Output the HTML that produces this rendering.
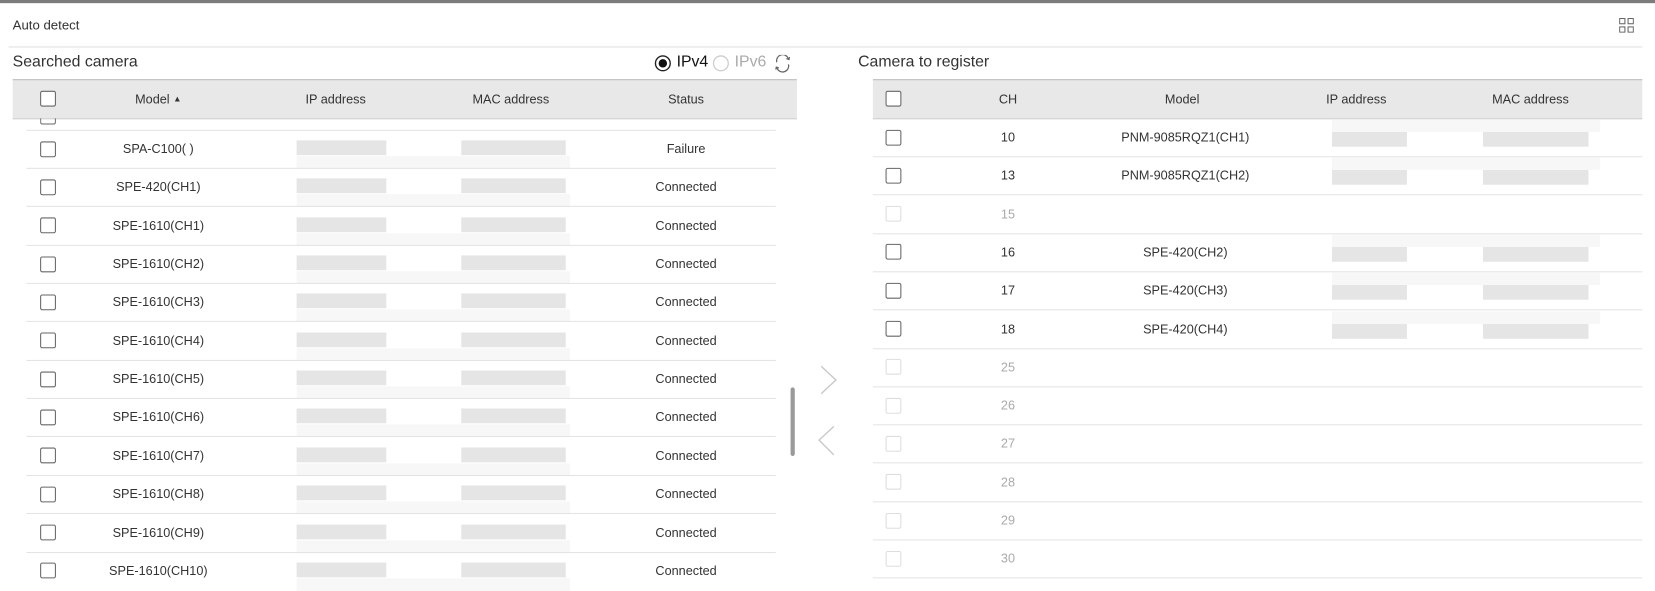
<!DOCTYPE html>
<html><head><meta charset="utf-8"><style>
html,body{margin:0;padding:0;background:#fff;overflow:hidden;width:1655px;height:580px}
#w{position:absolute;left:0;top:0;width:1568px;height:550px;transform:scale(1.05548);transform-origin:0 0;font-family:"Liberation Sans",sans-serif;color:#333}
.a{position:absolute}
.t{position:absolute;font-size:12px;transform:translate(-50%,-50%);white-space:nowrap}
.cb{position:absolute;width:13px;height:13px;border:1.3px solid #666;border-radius:2px;background:#fff}
.cb.d{border-color:#ddd}
.ln{position:absolute;height:1px;background:#e4e4e4}
.bl{position:absolute;height:14px;background:#e5e5e5}
.bl2{position:absolute;height:12px;background:#f7f7f7}
.hd{position:absolute;top:75px;height:36px;background:#e8e8e8;border-top:1.5px solid #bdbdbd;border-bottom:1px solid #d0d0d0}
</style></head><body><div id="w">
<div class="a" style="left:0;top:0;width:1568px;height:3px;background:#7c7c7c"></div>
<div class="a" style="left:12px;top:17px;font-size:12.5px">Auto detect</div>
<svg class="a" style="left:1534px;top:17px" width="14" height="14" viewBox="0 0 14 14" fill="none" stroke="#666" stroke-width="1"><rect x="0.5" y="0.5" width="5" height="5"/><rect x="8.5" y="0.5" width="5" height="5"/><rect x="0.5" y="8.5" width="5" height="5"/><rect x="8.5" y="8.5" width="5" height="5"/></svg>
<div class="ln" style="left:8px;top:44px;width:1548px;background:#e0e0e0"></div>
<div class="a" style="left:12px;top:50px;font-size:15px">Searched camera</div>
<svg class="a" style="left:620px;top:52px" width="140" height="18"><circle cx="8" cy="8" r="7" fill="#fff" stroke="#222" stroke-width="1.3"/><circle cx="8" cy="8" r="4" fill="#111"/><circle cx="63" cy="8" r="7" fill="#fff" stroke="#ccc" stroke-width="1.2"/><path d="M127 4 A5.5 5.5 0 0 0 116 7 M116 12 A5.5 5.5 0 0 0 127 9" stroke="#666" stroke-width="1.2" fill="none"/><path d="M125 3.5 L127.5 4.5 L128 2" stroke="#666" stroke-width="1.1" fill="none"/><path d="M118 12.5 L115.5 11.5 L115 14" stroke="#666" stroke-width="1.1" fill="none"/></svg>
<div class="a" style="left:641px;top:50px;font-size:15px;color:#111">IPv4</div>
<div class="a" style="left:696px;top:50px;font-size:15px;color:#aaa">IPv6</div>
<div class="a" style="left:813px;top:50px;font-size:15px">Camera to register</div>

<div class="hd" style="left:12px;width:743px"></div>
<div class="cb" style="left:38px;top:86px"></div>
<div class="t" style="left:150px;top:94px">Model <span style="font-size:8px;vertical-align:2px">▲</span></div>
<div class="t" style="left:318px;top:94px">IP address</div>
<div class="t" style="left:484px;top:94px">MAC address</div>
<div class="t" style="left:650px;top:94px">Status</div>

<div class="hd" style="left:827px;width:729px"></div>
<div class="cb" style="left:839px;top:86px"></div>
<div class="t" style="left:955px;top:94px">CH</div>
<div class="t" style="left:1120px;top:94px">Model</div>
<div class="t" style="left:1285px;top:94px">IP address</div>
<div class="t" style="left:1450px;top:94px">MAC address</div>

<div class="a" style="left:38px;top:112px;width:15px;height:6px;border:1.3px solid #666;border-top:none;box-sizing:border-box;border-radius:0 0 2px 2px"></div>
<div id="L"></div><div id="R"></div>

<div class="a" style="left:749px;top:367px;width:4px;height:65px;background:#9a9a9a;border-radius:2px"></div>
<svg class="a" style="left:770px;top:340px" width="30" height="100" fill="none" stroke="#c8c8c8" stroke-width="1.3"><path d="M8 7 L22 20 L8 33"/><path d="M20 64 L6 77 L20 91"/></svg>
</div>
<script>
var L=[["SPA-C100( )","Failure"],["SPE-420(CH1)","Connected"]];
for(var i=1;i<=10;i++)L.push(["SPE-1610(CH"+i+")","Connected"]);
var h="";
h+='<div class="ln" style="left:25px;top:123px;width:710px"></div>';
for(var i=0;i<12;i++){var c=141+i*36.35;
h+='<div class="cb" style="left:38px;top:'+(c-7.5)+'px"></div>';
h+='<div class="t" style="left:150px;top:'+c+'px">'+L[i][0]+'</div>';
h+='<div class="t" style="left:650px;top:'+c+'px">'+L[i][1]+'</div>';
h+='<div class="bl" style="left:281px;width:85px;top:'+(c-8)+'px"></div><div class="bl" style="left:437px;width:99px;top:'+(c-8)+'px"></div>';
h+='<div class="bl2" style="left:281px;width:259px;top:'+(c+7)+'px"></div>';
if(i<11)h+='<div class="ln" style="left:25px;top:'+(c+18)+'px;width:710px"></div>';}
document.getElementById("L").innerHTML=h;
var R=[["10","PNM-9085RQZ1(CH1)"],["13","PNM-9085RQZ1(CH2)"],["15",""],["16","SPE-420(CH2)"],["17","SPE-420(CH3)"],["18","SPE-420(CH4)"],["25",""],["26",""],["27",""],["28",""],["29",""],["30",""]];
h="";
for(var i=0;i<12;i++){var c=130+i*36.3,d=R[i][1]=="";
h+='<div class="cb'+(d?' d':'')+'" style="left:839px;top:'+(c-7.5)+'px"></div>';
h+='<div class="t" style="left:955px;top:'+c+'px;color:'+(d?'#aaa':'#333')+'">'+R[i][0]+'</div>';
if(!d){h+='<div class="t" style="left:1123px;top:'+c+'px">'+R[i][1]+'</div>';
h+='<div class="bl" style="left:1262px;width:71px;top:'+(c-5)+'px"></div><div class="bl" style="left:1405px;width:100px;top:'+(c-5)+'px"></div>';
h+='<div class="bl2" style="left:1262px;width:254px;top:'+(c-17)+'px"></div>';}
h+='<div class="ln" style="left:827px;top:'+(c+18)+'px;width:729px"></div>';}
document.getElementById("R").innerHTML=h;
</script>
</body></html>
